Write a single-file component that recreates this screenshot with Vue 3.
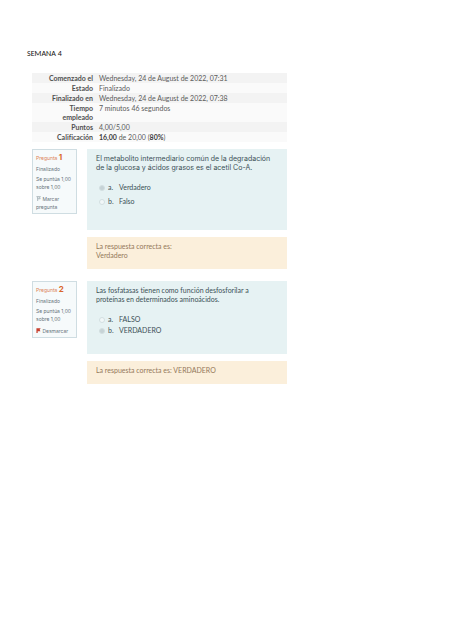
<template>
  <main class="page">
    <h1 class="week">SEMANA 4</h1>

    <div class="review">
      <table class="summary">
        <tbody>
          <tr v-for="row in summary" :key="row.label">
            <th scope="row">{{ row.label }}</th>
            <td v-if="row.grade"><b>16,00</b> de 20,00 (<b>80%</b>)</td>
            <td v-else>{{ row.value }}</td>
          </tr>
        </tbody>
      </table>

      <section
        v-for="q in questions"
        :key="q.number"
        class="question"
        :class="{ compact: q.flagged }"
      >
        <aside class="info">
          <h2 class="number">Pregunta <span>{{ q.number }}</span></h2>
          <p class="state">Finalizado</p>
          <p class="grade">Se puntúa 1,00 sobre 1,00</p>
          <button type="button" class="flag">
            <svg v-if="q.flagged" viewBox="0 0 6 6" aria-hidden="true">
              <path d="M.5.3H5.6L4.4 2 5.3 3.8H2V6H.5Z" fill="#c8402f" />
            </svg>
            <svg v-else viewBox="0 0 6 6" aria-hidden="true">
              <path d="M.5.8H2V6M2 .8H5.3L4.3 2 5 3.3H2" fill="none" stroke="#8c9ba1" stroke-width=".8" />
            </svg>
            {{ q.flagLabel }}
          </button>
        </aside>

        <div class="content">
          <div class="formulation">
            <p class="qtext">{{ q.text }}</p>
            <div class="answers">
              <label v-for="a in q.answers" :key="a.letter" class="answer">
                <input
                  type="radio"
                  :name="'q' + q.number"
                  :checked="a.checked"
                  disabled
                >
                <span class="letter">{{ a.letter }}.</span>
                <span>{{ a.text }}</span>
              </label>
            </div>
          </div>
          <div class="outcome">
            <p v-for="line in q.outcome" :key="line">{{ line }}</p>
          </div>
        </div>
      </section>
    </div>
  </main>
</template>

<script setup>
const summary = [
  { label: 'Comenzado el', value: 'Wednesday, 24 de August de 2022, 07:31' },
  { label: 'Estado', value: 'Finalizado' },
  { label: 'Finalizado en', value: 'Wednesday, 24 de August de 2022, 07:38' },
  { label: 'Tiempo empleado', value: '7 minutos 46 segundos' },
  { label: 'Puntos', value: '4,00/5,00' },
  { label: 'Calificación', grade: true }
]

const questions = [
  {
    number: 1,
    flagged: false,
    flagLabel: 'Marcar pregunta',
    text: 'El metabolito intermediario común de la degradación de la glucosa y ácidos grasos es el acetil Co-A.',
    answers: [
      { letter: 'a', text: 'Verdadero', checked: true },
      { letter: 'b', text: 'Falso', checked: false }
    ],
    outcome: ['La respuesta correcta es:', 'Verdadero']
  },
  {
    number: 2,
    flagged: true,
    flagLabel: 'Desmarcar',
    text: 'Las fosfatasas tienen como función desfosforilar a proteínas en determinados aminoácidos.',
    answers: [
      { letter: 'a', text: 'FALSO', checked: false },
      { letter: 'b', text: 'VERDADERO', checked: true }
    ],
    outcome: ['La respuesta correcta es: VERDADERO']
  }
]
</script>

<style>
body {
  margin: 0;
  background: #ffffff;
}
</style>

<style scoped>
.page {
  padding: 48px 0 24px 27px;
  font-family: "Century Gothic", Lato, "Liberation Sans", sans-serif;
  font-size: 7px;
  line-height: 9px;
  font-variant-ligatures: none;
  color: #5a5a5a;
}
h1, h2, p {
  margin: 0;
}
.week {
  font-family: Calibri, Lato, sans-serif;
  font-size: 8px;
  line-height: 10px;
  font-weight: 400;
  color: #111111;
}
.review {
  width: 61%;
  padding: 15px 0 0 5px;
  box-sizing: border-box;
}
.summary {
  width: 100%;
  table-layout: fixed;
  border-collapse: collapse;
}
.summary tr {
  background: #fafafa;
}
.summary tr:nth-child(odd) {
  background: #f3f3f3;
}
.summary th,
.summary td {
  padding: 1px 3px 0;
  vertical-align: top;
}
.summary th {
  width: 50px;
  padding-left: 11px;
  text-align: right;
  font-weight: 700;
  color: #505050;
}
.summary b {
  font-weight: 700;
  color: #3c3c3c;
}
.question {
  display: flex;
  align-items: flex-start;
  gap: 10px;
  margin-top: 7px;
}
.question + .question {
  margin-top: 12px;
}
.info {
  box-sizing: border-box;
  flex: none;
  width: 45px;
  padding: 2px 3px;
  border: 1px solid #cfdde2;
  background: #f6fafb;
  font-family: "Century Gothic", Inter, sans-serif;
  font-size: 5px;
  line-height: 8px;
  color: #66737a;
}
.number {
  font-size: 5px;
  line-height: 10px;
  font-weight: 400;
  color: #dc8456;
}
.number span {
  font-size: 8px;
  font-weight: 700;
  color: #d9662b;
}
.state,
.grade {
  margin-top: 2px;
}
.flag {
  display: block;
  margin: 4px 0 0;
  padding: 0;
  border: 0;
  background: none;
  font: inherit;
  color: inherit;
  text-align: left;
}
.flag svg {
  width: 5px;
  height: 5px;
}
.content {
  flex: 1;
  min-width: 0;
}
.formulation {
  box-sizing: border-box;
  min-height: 81px;
  padding: 5px 9px;
  background: #e6f2f3;
  color: #3b5056;
}
.compact .formulation {
  min-height: 73px;
}
.qtext {
  font-family: "Century Gothic", Inter, sans-serif;
}
.compact .qtext {
  padding-right: 16px;
  font-family: "Century Gothic", Lato, sans-serif;
}
.answers {
  display: flex;
  flex-direction: column;
  gap: 5px;
  margin-top: 11px;
}
.compact .answers {
  gap: 2px;
}
.answer {
  display: flex;
  align-items: center;
  padding-left: 3px;
}
.answer input {
  appearance: none;
  box-sizing: border-box;
  width: 6px;
  height: 6px;
  margin: 0 3px 0 0;
  border: 1px solid #d3dfe1;
  border-radius: 50%;
  background: #f1f7f8;
}
.answer input:checked {
  background: #c6d3d6;
}
.letter {
  width: 11px;
}
.outcome {
  margin-top: 7px;
  padding: 5px 9px 9px;
  background: #fbefdb;
  color: #94785a;
}
</style>
